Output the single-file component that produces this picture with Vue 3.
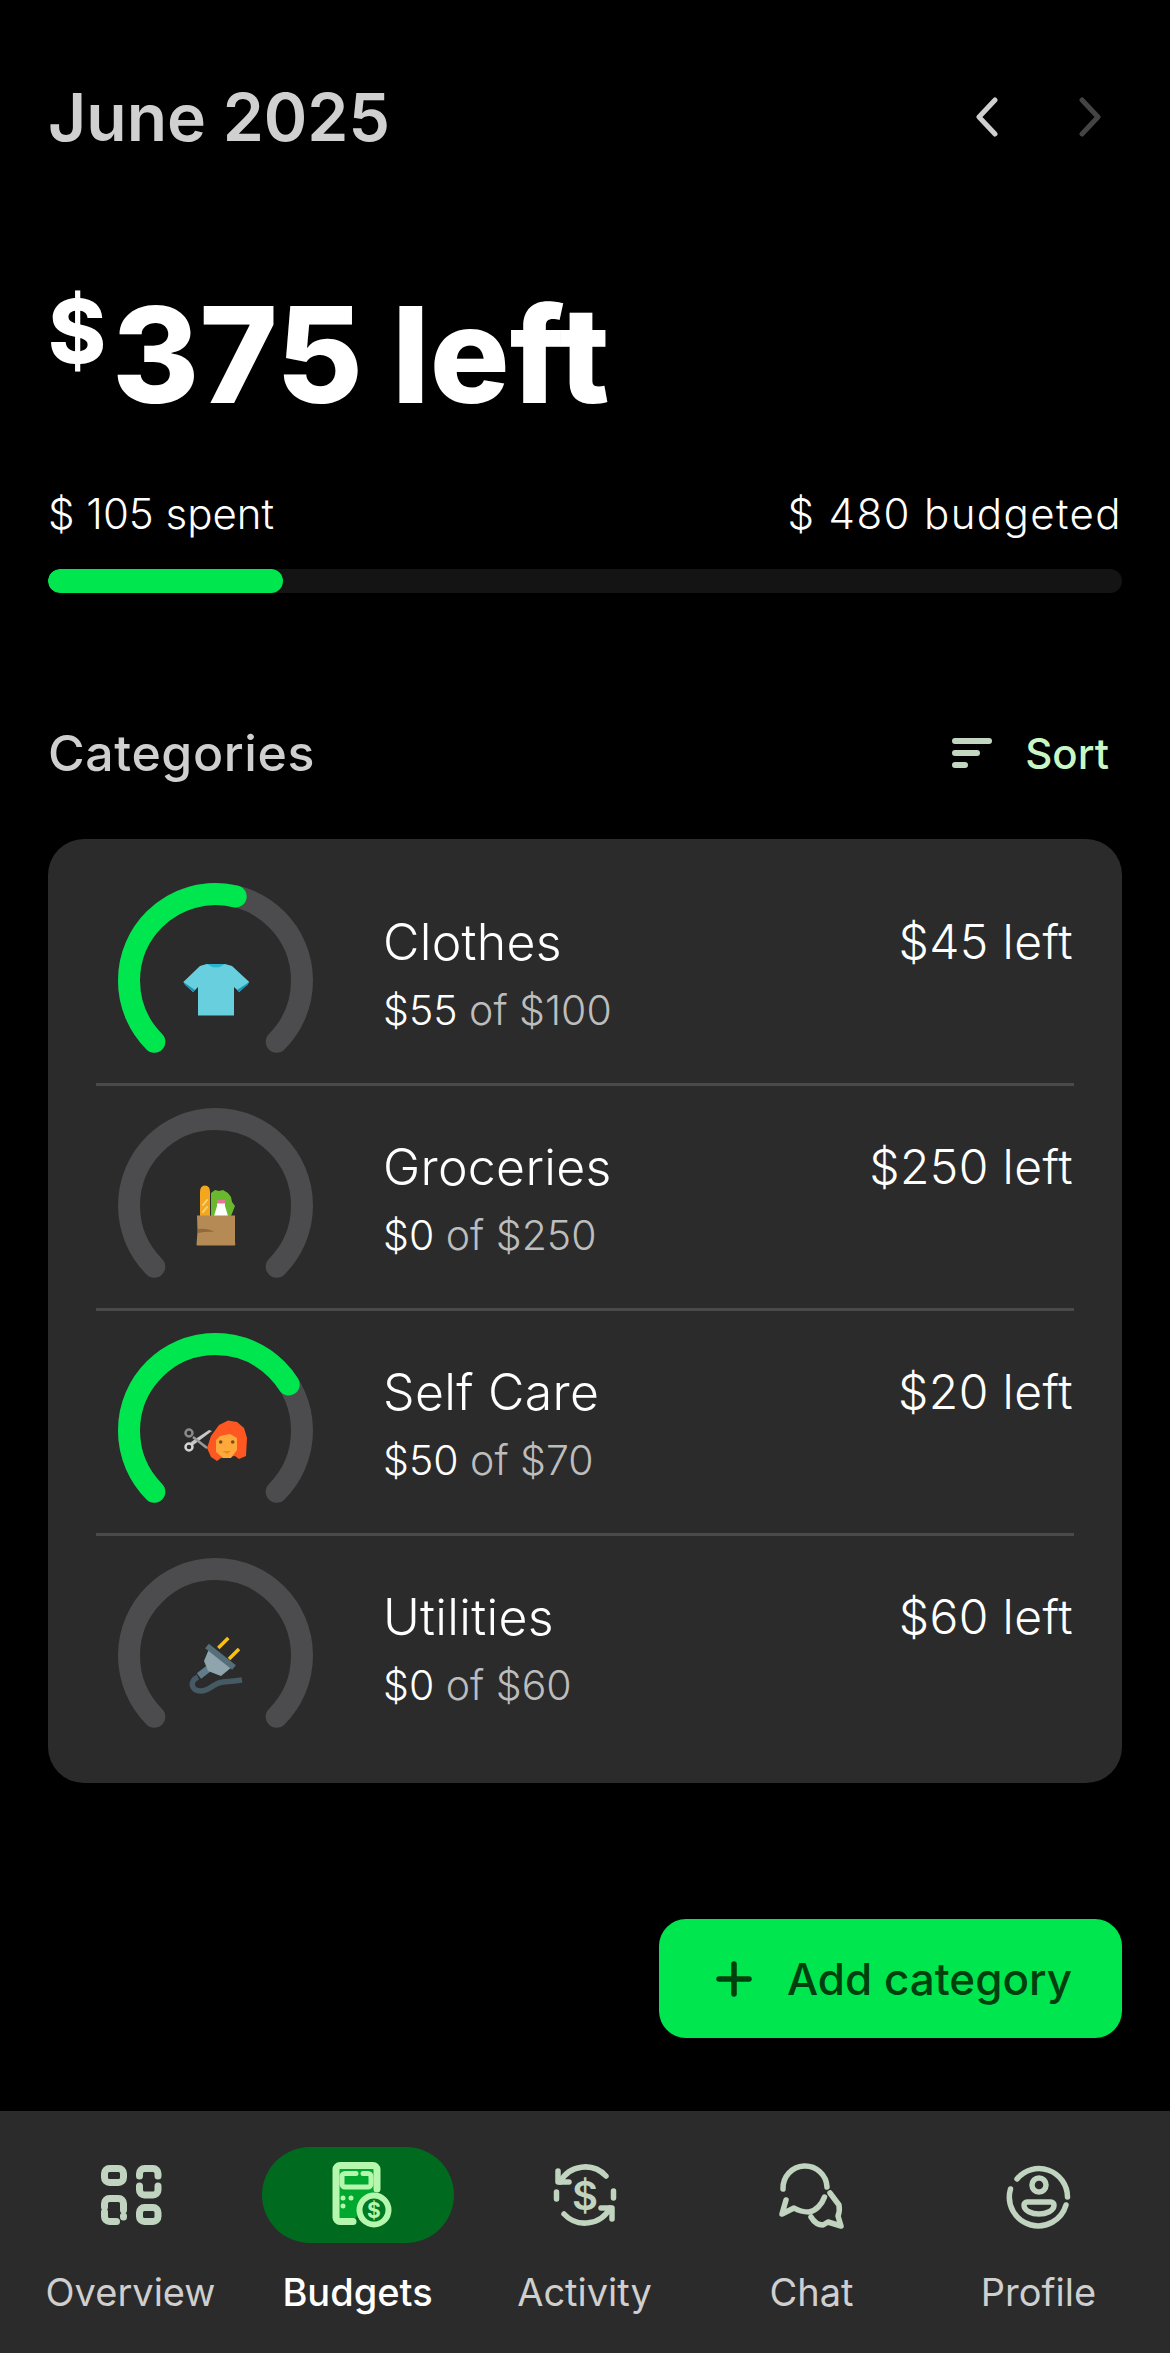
<template>
  <div class="budget-page">
    <header class="month-bar">
      <h1 class="month-bar__title">June 2025</h1>
      <div class="month-bar__arrows">
        <svg class="chevron" viewBox="0 0 24 40" fill="none" stroke="#cfcfcf" stroke-width="5" stroke-linecap="round" stroke-linejoin="round">
          <path d="M20 3 4 20l16 17" />
        </svg>
        <svg class="chevron" viewBox="0 0 24 40" fill="none" stroke="#444444" stroke-width="5" stroke-linecap="round" stroke-linejoin="round">
          <path d="M4 3l16 17L4 37" />
        </svg>
      </div>
    </header>

    <section class="summary">
      <div class="summary__left"><span class="summary__currency">$</span>375 left</div>
      <div class="summary__labels">
        <span>$ 105 spent</span>
        <span class="summary__budgeted">$ 480 budgeted</span>
      </div>
      <div class="summary__track">
        <div class="summary__fill" :style="{ width: spentPercent + '%' }"></div>
      </div>
    </section>

    <div class="section-head">
      <h2 class="section-head__title">Categories</h2>
      <button type="button" class="sort-btn">
        <svg class="sort-btn__icon" viewBox="0 0 40 30" fill="none" stroke="#c3d6c2" stroke-width="6" stroke-linecap="round">
          <path d="M3 3h34M3 15h22M3 27h10" />
        </svg>
        <span>Sort</span>
      </button>
    </div>

    <div class="category-card">
      <div v-for="cat in categories" :key="cat.name" class="category">
        <div class="gauge">
          <svg class="gauge__ring" viewBox="0 0 195 195" fill="none" stroke-width="22" stroke-linecap="round">
            <path :d="arcPath" stroke="#4c4c4e" pathLength="100" />
            <path
              v-if="cat.spent > 0"
              :d="arcPath"
              stroke="#00e64f"
              pathLength="100"
              :stroke-dasharray="`${(cat.spent / cat.total) * 100} 200`"
            />
          </svg>

          <svg v-if="cat.emoji === 'shirt'" class="gauge__emoji" viewBox="0 0 72 72">
            <path d="M26.7 10H45l7 2 17.3 16-10 10-5.300-5v28.500H18V33l-5 5L3.300 28 20 12z" fill="#68cfdf" />
            <path d="M27 10h18q-9 7-18 0z" fill="#29b6d2" />
            <path d="M3.300 28l1.700 3 8 7 2-2zM69.300 28l-1.700 3-8.600 7-2-2z" fill="#1a96b5" />
          </svg>

          <svg v-else-if="cat.emoji === 'groceries'" class="gauge__emoji" viewBox="0 0 72 72">
            <path d="M20 37V13q0-6.500 5-6.500t5 6.500v24z" fill="#f2a71e" />
            <path d="M23 26l4-5M23 33l4-5" stroke="#fbd27a" stroke-width="2" stroke-linecap="round" />
            <path d="M31 37V14l4-3 4 1 4-1 5 3 3 4 1 5 3 4-2 5-2 5z" fill="#6ab82e" />
            <path d="M34 37l3-10V23h8v4l3 10z" fill="#ffffff" />
            <rect x="37" y="21" width="8" height="3.500" fill="#e8749a" />
            <path d="M17 36.500h38v26l.3 3a1 1 0 0 1-1 1H17.500a1 1 0 0 1-1-1l1-13z" fill="#b58a55" />
            <path d="M18 50q10-1 16 3-6-1-16 1z" fill="#8f6a3d" />
          </svg>

          <svg v-else-if="cat.emoji === 'haircut'" class="gauge__emoji" viewBox="0 0 72 72">
            <path d="M27 44l4-12 8-11 9-4.500 9 1.500 7 6 3 10-1 18-7 3-4-3-14 2-4 3-6-4z" fill="#ff5722" />
            <path d="M36 36l4-4 10-2 7 4v12l-6 8h-8l-7-6z" fill="#ffa83c" />
            <circle cx="40.700" cy="38" r="1.800" fill="#7a4a1a" />
            <circle cx="52.700" cy="38" r="1.800" fill="#7a4a1a" />
            <path d="M42.500 47h8.500l-4 3z" fill="#ef8a12" />
            <path d="M12 42l20-15-3-1L11 38z" fill="#c8c8c8" />
            <path d="M13 33l14 11" stroke="#9a9a9a" stroke-width="2.500" />
            <circle cx="9" cy="29" r="3.500" fill="none" stroke="#8a8a8a" stroke-width="2.500" />
            <circle cx="9" cy="43" r="3.500" fill="none" stroke="#d4d4d4" stroke-width="2.500" />
          </svg>

          <svg v-else class="gauge__emoji" viewBox="0 0 72 72">
            <path d="M38.300 19l10-10M49 30l10-10" stroke="#ffc107" stroke-width="3.500" />
            <path d="M19 47l9-7" stroke="#607d8b" stroke-width="7" />
            <path d="M29 20L52 38l-11 9-13-5-4-10z" fill="#90a4ae" />
            <path d="M27 17l27 21.500" stroke="#546e7a" stroke-width="6" />
            <path d="M18 48c-9 4-7 14 3 14 9 0 12-8 22-9 6-.500 12-1 19-2" fill="none" stroke="#455a64" stroke-width="5.500" />
          </svg>
        </div>

        <div class="category__info">
          <div class="category__name">{{ cat.name }}</div>
          <div class="category__amount">
            <span class="category__spent">${{ cat.spent }}</span> of ${{ cat.total }}
          </div>
        </div>
        <div class="category__left">${{ cat.total - cat.spent }} left</div>
      </div>
    </div>

    <div class="add-row">
      <button type="button" class="add-btn">
        <svg class="add-btn__icon" viewBox="0 0 36 36" fill="none" stroke="#00400f" stroke-width="5.500" stroke-linecap="round">
          <path d="M18 3v30M3 18h30" />
        </svg>
        <span>Add category</span>
      </button>
    </div>

    <nav class="tab-bar">
      <div class="tab">
        <div class="tab__icon-wrap">
          <svg class="tab__icon" viewBox="0 0 72 72" fill="none" stroke="#c0d4bf" stroke-width="7" stroke-linecap="round">
            <rect x="9.500" y="9.500" width="19" height="14" rx="5" />
            <path d="M44.500 17v-2.500a5 5 0 0 1 5-5H58a5 5 0 0 1 5 5V17M44.500 27v4a5 5 0 0 0 5 5H58a5 5 0 0 0 5-5v-4" />
            <path d="M9.500 48v-3.500a5 5 0 0 1 5-5h9a5 5 0 0 1 5 5V51M9.500 53v4.500a5 5 0 0 0 5 5h7M28.500 58v-1" />
            <rect x="44.500" y="48.500" width="18.500" height="14" rx="5" />
          </svg>
        </div>
        <span class="tab__label">Overview</span>
      </div>

      <div class="tab tab--active">
        <div class="tab__icon-wrap">
          <svg class="tab__icon" viewBox="0 0 72 72" fill="none" stroke="#b5f8ad" stroke-width="7" stroke-linecap="round" stroke-linejoin="round">
            <path d="M31 62.500H18a4 4 0 0 1-4-4V10.500a4 4 0 0 1 4-4h33a4 4 0 0 1 4 4V30" fill="#00a82f" />
            <path d="M34 14.500H23a3 3 0 0 0-3 3V25a3 3 0 0 0 3 3h23a3 3 0 0 0 3-3v-7.500a3 3 0 0 0-3-3h-5" stroke-width="5" />
            <path d="M21 39v.1M29 39v.1M21 47v.1" stroke-width="5" />
            <circle cx="52" cy="51" r="14.500" fill="#007a25" stroke-width="6" />
            <text class="tab__coin" x="52" y="58.500" text-anchor="middle">$</text>
          </svg>
        </div>
        <span class="tab__label">Budgets</span>
      </div>

      <div class="tab">
        <div class="tab__icon-wrap">
          <svg class="tab__icon" viewBox="0 0 72 72" fill="none" stroke="#c0d4bf" stroke-width="5.500" stroke-linecap="round" stroke-linejoin="round">
            <path d="M11 23A28.500 28.500 0 0 1 57 17M64.500 32v7M61 49A28.500 28.500 0 0 1 15 55M7.500 33v7" />
            <path d="M9 12v11h11M63 60V49H52" />
            <text class="tab__dollar" x="36" y="50.500" text-anchor="middle">$</text>
          </svg>
        </div>
        <span class="tab__label">Activity</span>
      </div>

      <div class="tab">
        <div class="tab__icon-wrap">
          <svg class="tab__icon" viewBox="0 0 72 72" fill="none" stroke="#c0d4bf" stroke-width="5.500" stroke-linecap="round" stroke-linejoin="round">
            <path d="M51 28A22 22 0 0 0 7 30" />
            <path d="M10 41L6 55l12-6c5 3 11 4 15 4 7-1 13-8 15.500-15" />
            <path d="M54 34l9 12q1 6-1 11l3 10-13-4-5 3c-5 0-9-3-12-8" />
          </svg>
        </div>
        <span class="tab__label">Chat</span>
      </div>

      <div class="tab">
        <div class="tab__icon-wrap">
          <svg class="tab__icon" viewBox="0 0 72 72" fill="none" stroke="#c0d4bf" stroke-width="5.500" stroke-linecap="round" stroke-linejoin="round">
            <path d="M64.500 38A28.500 28.500 0 0 0 14 20M7.500 30A28.500 28.500 0 0 0 63 46" />
            <circle cx="36" cy="26" r="7" />
            <path d="M24 43h24a3 3 0 0 1 3 3c0 6-8 9-15 9s-15-3-15-9a3 3 0 0 1 3-3z" />
          </svg>
        </div>
        <span class="tab__label">Profile</span>
      </div>
    </nav>
  </div>
</template>

<script setup>
const spentPercent = 21.9;

// 270 degree gauge, opening at the bottom
const arcPath = "M36.300 158.700A86.500 86.500 0 1 1 158.700 158.700";

const categories = [
  { name: "Clothes", spent: 55, total: 100, emoji: "shirt" },
  { name: "Groceries", spent: 0, total: 250, emoji: "groceries" },
  { name: "Self Care", spent: 50, total: 70, emoji: "haircut" },
  { name: "Utilities", spent: 0, total: 60, emoji: "plug" }
];
</script>

<style scoped>
.budget-page {
  display: flex;
  flex-direction: column;
  width: 1170px;
  height: 2353px;
  box-sizing: border-box;
  background: #000000;
  color: #ffffff;
  font-family: "Inter", "Noto Sans", sans-serif;
  overflow: hidden;
}

.month-bar {
  display: flex;
  justify-content: space-between;
  align-items: center;
  height: 72px;
  margin-top: 81px;
  padding: 0 68px 0 48px;
}

.month-bar__title {
  margin: 0;
  color: #d0d0d0;
  font-size: 66px;
  font-weight: 600;
  line-height: 72px;
}

.month-bar__arrows {
  display: flex;
  gap: 79px;
}

.chevron {
  width: 24px;
  height: 40px;
}

.summary {
  margin-top: 128px;
  padding: 0 48px;
}

.summary__left {
  display: flex;
  height: 148px;
  font-size: 133px;
  font-weight: 800;
  line-height: 148px;
}

.summary__currency {
  margin-right: 6px;
  font-size: 88px;
  line-height: 100px;
}

.summary__labels {
  display: flex;
  justify-content: space-between;
  margin-top: 60px;
  font-size: 42px;
  font-weight: 300;
  line-height: 50px;
}

.summary__budgeted {
  letter-spacing: 1.4px;
}

.summary__track {
  height: 24px;
  margin-top: 30px;
  border-radius: 12px;
  background: #141414;
  overflow: hidden;
}

.summary__fill {
  height: 100%;
  border-radius: 12px;
  background: #00e64f;
}

.section-head {
  display: flex;
  justify-content: space-between;
  align-items: center;
  height: 60px;
  margin-top: 130px;
  padding: 0 61px 0 48px;
}

.section-head__title {
  margin: 0;
  color: #cfcfcf;
  font-size: 50px;
  font-weight: 500;
  letter-spacing: 0.6px;
  line-height: 60px;
}

.sort-btn {
  display: flex;
  align-items: center;
  gap: 33px;
  padding: 0;
  border: none;
  background: transparent;
  color: #c8f7c5;
  font-family: inherit;
  font-size: 42px;
  font-weight: 500;
}

.sort-btn__icon {
  width: 40px;
  height: 30px;
}

.category-card {
  margin: 56px 48px 0;
  padding: 22px 48px;
  border-radius: 36px;
  background: #2b2b2b;
}

.category {
  display: flex;
  align-items: flex-start;
  height: 225px;
  box-sizing: border-box;
  padding-top: 22px;
  border-bottom: 3px solid #4a4a4a;
}

.category:last-child {
  border-bottom: none;
}

.gauge {
  position: relative;
  flex: none;
  width: 195px;
  height: 195px;
  margin-left: 22px;
}

.gauge__ring {
  display: block;
  width: 195px;
  height: 195px;
}

.gauge__emoji {
  position: absolute;
  left: 61.5px;
  top: 70.5px;
  width: 72px;
  height: 72px;
}

.category__info {
  margin-left: 70px;
  padding-top: 30px;
}

.category__name {
  font-size: 50px;
  font-weight: 300;
  letter-spacing: 0.3px;
  line-height: 58px;
}

.category__amount {
  margin-top: 14px;
  color: #bdbdbd;
  font-size: 41px;
  font-weight: 300;
  line-height: 50px;
}

.category__spent {
  color: #ffffff;
}

.category__left {
  margin-left: auto;
  margin-right: 1px;
  padding-top: 30px;
  font-size: 48px;
  font-weight: 300;
  letter-spacing: 0.4px;
  line-height: 58px;
}

.add-row {
  display: flex;
  justify-content: flex-end;
  margin-top: 136px;
  padding: 0 48px;
}

.add-btn {
  display: flex;
  align-items: center;
  gap: 35px;
  height: 119px;
  padding: 0 50px 0 57px;
  border: none;
  border-radius: 27px;
  background: #00e64f;
  color: #00400f;
  font-family: inherit;
  font-size: 44px;
  font-weight: 500;
}

.add-btn__icon {
  width: 36px;
  height: 36px;
}

.tab-bar {
  display: grid;
  grid-template-columns: repeat(5, 227px);
  height: 242px;
  margin-top: auto;
  padding: 36px 0 0 17px;
  box-sizing: border-box;
  background: #2b2b2b;
}

.tab {
  display: flex;
  flex-direction: column;
  align-items: center;
}

.tab__icon-wrap {
  display: flex;
  justify-content: center;
  align-items: center;
  width: 192px;
  height: 96px;
  border-radius: 48px;
}

.tab--active .tab__icon-wrap {
  background: #006b1f;
}

.tab__icon {
  width: 72px;
  height: 72px;
}

.tab__coin {
  fill: #b5f8ad;
  stroke: none;
  font-size: 21px;
  font-weight: 700;
}

.tab__dollar {
  fill: #c0d4bf;
  stroke: none;
  font-size: 40px;
  font-weight: 600;
}

.tab__label {
  margin-top: 25px;
  color: #cfcfcf;
  font-size: 38px;
  font-weight: 400;
  line-height: 48px;
}

.tab--active .tab__label {
  color: #ffffff;
  font-weight: 500;
}
</style>
